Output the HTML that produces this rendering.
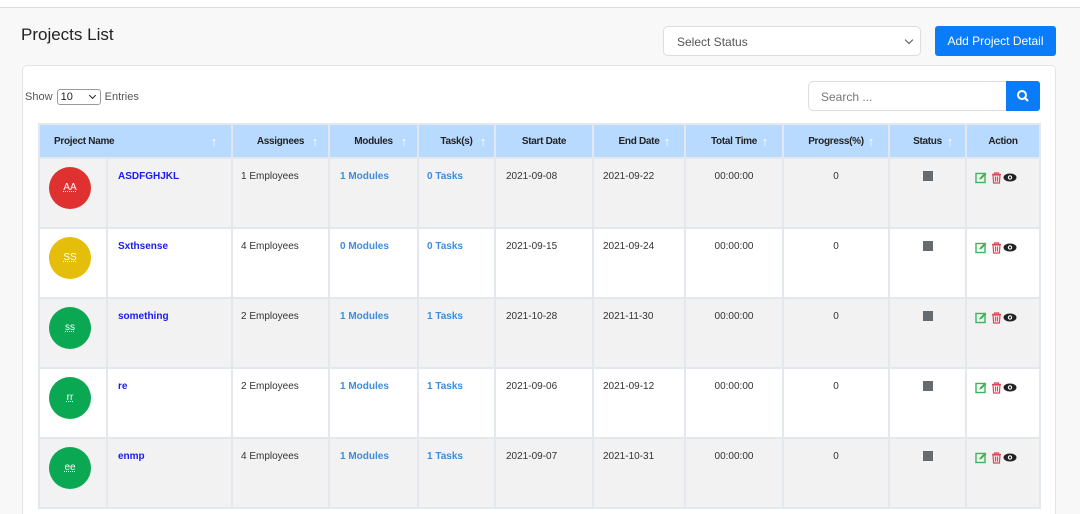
<!DOCTYPE html>
<html><head><style>
*{box-sizing:border-box;margin:0;padding:0}
html,body{width:1080px;height:514px;overflow:hidden}
body{background:#f8f8f9;font-family:"Liberation Sans",sans-serif;color:#333;position:relative}
.topbar{position:absolute;left:0;top:0;width:1080px;height:8px;background:#fff;border-bottom:1px solid #ddd}
h1{position:absolute;left:21px;top:25px;font-size:17px;font-weight:normal;color:#222}
.sel{position:absolute;left:663px;top:26px;width:258px;height:30px;background:#fff;border:1px solid #ddd;border-radius:5px;font-size:12px;color:#555;padding:8px 13px}
.sel:after{content:"";position:absolute;right:8px;top:10px;width:5px;height:5px;border-right:1.5px solid #555;border-bottom:1.5px solid #555;transform:rotate(45deg)}
.btn{position:absolute;left:935px;top:26px;width:121px;height:30px;background:#0b7cf9;color:#fff;border-radius:3px;font-size:12px;text-align:center;line-height:30px}
.card{position:absolute;left:22px;top:65px;width:1034px;height:470px;background:#fff;border:1px solid #e4e4e4;border-radius:5px}
.show{position:absolute;left:25px;top:89px;font-size:11px;color:#555}
.show span{display:inline-block;width:44px;height:16px;border:1px solid #999;border-radius:3px;vertical-align:middle;font-size:11px;color:#222;padding-left:3px;line-height:14px;position:relative;margin:0 1px}
.show span:after{content:"";position:absolute;right:5px;top:3px;width:4px;height:4px;border-right:1.5px solid #222;border-bottom:1.5px solid #222;transform:rotate(45deg)}
.search{position:absolute;left:808px;top:81px;width:200px;height:30px;border:1px solid #ddd;border-radius:5px 0 0 5px;background:#fff;font-size:12px;color:#777;padding:8px 12px}
.sbtn{position:absolute;left:1006px;top:81px;width:34px;height:30px;background:#0b7cf9;border-radius:0 3px 3px 0}
table{position:absolute;left:38px;top:123px;border-collapse:collapse;font-size:10px}
th{background:#b8dafe;height:34px;font-size:10px;color:#222;border:2px solid #e3e8ee;position:relative;font-weight:bold;letter-spacing:-0.3px}
th i{position:absolute;right:14px;top:9px;color:#fff;font-style:normal;font-size:13px;font-weight:bold}
td{border:2px solid #e3e8ee;height:70px;vertical-align:top;padding-top:12px;color:#333}
tr.o td{background:#f2f2f2}
td.c{text-align:center}
td.av{padding:8px 0 0 0}
.circ{width:42px;height:42px;border-radius:50%;margin-left:9px;color:#fff;font-size:10px;text-align:center;line-height:42px;text-decoration:underline dotted}
.nm{color:#1a1aee;font-weight:bold;padding-left:10px}
.lk{color:#3a8de0;font-weight:bold}
.sq{display:inline-block;width:10px;height:10px;background:#666b70}
.act{padding-left:8px}
</style></head><body>
<div class="topbar"></div>
<h1>Projects List</h1>
<div class="sel">Select Status</div>
<div class="btn">Add Project Detail</div>
<div class="card"></div>
<div class="show">Show <span>10</span> Entries</div>
<div class="search">Search ...</div>
<div class="sbtn"><svg width="34" height="30"><circle cx="16" cy="14" r="4" fill="none" stroke="#fff" stroke-width="2"/><line x1="19" y1="17" x2="22" y2="20" stroke="#fff" stroke-width="2.2"/></svg></div>
<table>
<tr><th colspan="2" style="width:193px;text-align:left;padding-left:14px">Project Name<i>↑</i></th><th style="width:97px">Assignees<i style="right:10px">↑</i></th><th style="width:89px">Modules<i style="right:10px">↑</i></th><th style="width:77px">Task(s)<i style="right:8px">↑</i></th><th style="width:98px">Start Date</th><th style="width:92px">End Date<i>↑</i></th><th style="width:98px">Total Time<i>↑</i></th><th style="width:106px">Progress(%)<i>↑</i></th><th style="width:77px">Status<i style="right:12px">↑</i></th><th style="width:74px">Action</th></tr>
<tr class="o"><td class="av" style="width:68px"><div class="circ" style="background:#e03131">AA</div></td><td class="nm">ASDFGHJKL</td><td style="padding-left:8px">1 Employees</td><td class="lk" style="padding-left:10px">1 Modules</td><td class="lk" style="padding-left:8px">0 Tasks</td><td style="padding-left:10px">2021-09-08</td><td style="padding-left:9px">2021-09-22</td><td class="c">00:00:00</td><td class="c">0</td><td class="c"><span class="sq"></span></td><td class="act">ICONS</td></tr>
<tr><td class="av"><div class="circ" style="background:#e5bd0b">SS</div></td><td class="nm">Sxthsense</td><td style="padding-left:8px">4 Employees</td><td class="lk" style="padding-left:10px">0 Modules</td><td class="lk" style="padding-left:8px">0 Tasks</td><td style="padding-left:10px">2021-09-15</td><td style="padding-left:9px">2021-09-24</td><td class="c">00:00:00</td><td class="c">0</td><td class="c"><span class="sq"></span></td><td class="act">ICONS</td></tr>
<tr class="o"><td class="av"><div class="circ" style="background:#0ba854">ss</div></td><td class="nm">something</td><td style="padding-left:8px">2 Employees</td><td class="lk" style="padding-left:10px">1 Modules</td><td class="lk" style="padding-left:8px">1 Tasks</td><td style="padding-left:10px">2021-10-28</td><td style="padding-left:9px">2021-11-30</td><td class="c">00:00:00</td><td class="c">0</td><td class="c"><span class="sq"></span></td><td class="act">ICONS</td></tr>
<tr><td class="av"><div class="circ" style="background:#0ba854">rr</div></td><td class="nm">re</td><td style="padding-left:8px">2 Employees</td><td class="lk" style="padding-left:10px">1 Modules</td><td class="lk" style="padding-left:8px">1 Tasks</td><td style="padding-left:10px">2021-09-06</td><td style="padding-left:9px">2021-09-12</td><td class="c">00:00:00</td><td class="c">0</td><td class="c"><span class="sq"></span></td><td class="act">ICONS</td></tr>
<tr class="o"><td class="av"><div class="circ" style="background:#0ba854">ee</div></td><td class="nm">enmp</td><td style="padding-left:8px">4 Employees</td><td class="lk" style="padding-left:10px">1 Modules</td><td class="lk" style="padding-left:8px">1 Tasks</td><td style="padding-left:10px">2021-09-07</td><td style="padding-left:9px">2021-10-31</td><td class="c">00:00:00</td><td class="c">0</td><td class="c"><span class="sq"></span></td><td class="act">ICONS</td></tr>
</table>
<script>
var ic='<svg width="50" height="13" viewBox="0 0 50 13"><rect x="1" y="2.5" width="9" height="9" fill="none" stroke="#3cb55a" stroke-width="1.4"/><path d="M4 8.5 L5 6.5 L10 1.5 L11.5 3 L6.5 8 Z" fill="#3cb55a"/><path d="M17 3.5 H26 M19.5 3.5 V2 H23.5 V3.5 M18 4 L18.6 12 H24.4 L25 4 Z M20.5 5.5 V10.5 M22.5 5.5 V10.5" fill="none" stroke="#e0455a" stroke-width="1.2"/><ellipse cx="35" cy="6.5" rx="6.5" ry="4" fill="#222"/><circle cx="35" cy="6.5" r="2.2" fill="#fff"/><circle cx="35" cy="6.5" r="1.1" fill="#222"/></svg>';
document.querySelectorAll('.act').forEach(function(e){e.innerHTML=ic});
</script>
</body></html>
